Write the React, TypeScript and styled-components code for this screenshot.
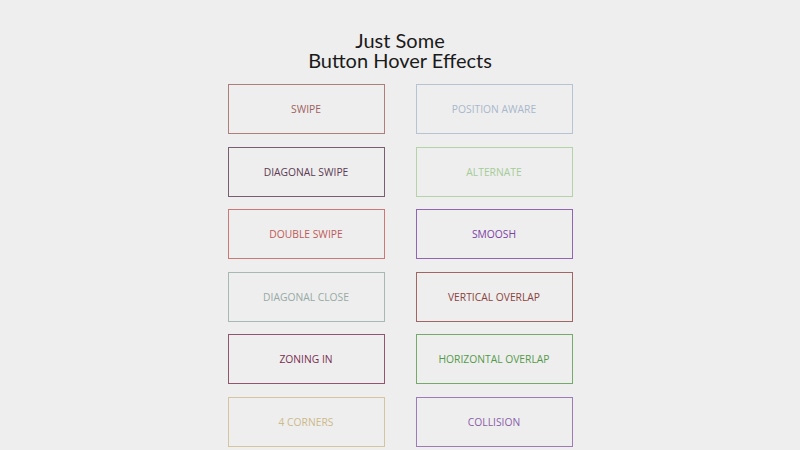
import React from "react";
import styled, { createGlobalStyle } from "styled-components";

interface Effect {
  label: string;
  color: string;
}

const effects: Effect[] = [
  { label: "Swipe", color: "#9e625e" },
  { label: "Position Aware", color: "#a9b8cc" },
  { label: "Diagonal Swipe", color: "#5c3a52" },
  { label: "Alternate", color: "#a5cc98" },
  { label: "Double Swipe", color: "#c25a58" },
  { label: "Smoosh", color: "#7c42a6" },
  { label: "Diagonal Close", color: "#97aaa5" },
  { label: "Vertical Overlap", color: "#8c4440" },
  { label: "Zoning In", color: "#783050" },
  { label: "Horizontal Overlap", color: "#559a4a" },
  { label: "4 Corners", color: "#cdba8c" },
  { label: "Collision", color: "#8a5eaa" },
];

const GlobalStyle = createGlobalStyle`
  html, body {
    margin: 0;
    padding: 0;
    background: #eeeeee;
    overflow: hidden;
  }
  body {
    font-family: "Open Sans", "Noto Sans", sans-serif;
  }
`;

const Page = styled.div`
  display: flex;
  flex-direction: column;
  align-items: center;
  padding-top: 30px;
  height: 450px;
  box-sizing: border-box;
`;

const Title = styled.h1`
  margin: 0 0 14px;
  font-family: Lato, "Noto Sans", sans-serif;
  font-weight: 400;
  font-size: 20px;
  line-height: 20px;
  color: #1a1a1a;
  text-align: center;
`;

const Grid = styled.div`
  display: grid;
  grid-template-columns: repeat(2, 157px);
  column-gap: 31px;
  row-gap: 12.6px;
`;

const EffectButton = styled.button<{ $color: string }>`
  height: 50px;
  display: flex;
  align-items: center;
  justify-content: center;
  background: transparent;
  border: 1px solid color-mix(in srgb, ${(p) => p.$color} 80%, #eeeeee);
  color: ${(p) => p.$color};
  font-family: "Open Sans", "Noto Sans", sans-serif;
  font-size: 10.3px;
  text-transform: uppercase;
  padding: 0;
  cursor: pointer;
`;

const App = () => {
  return (
    <Page>
      <GlobalStyle />
      <Title>
        Just Some
        <br />
        Button Hover Effects
      </Title>
      <Grid>
        {effects.map((effect) => (
          <EffectButton key={effect.label} $color={effect.color}>
            {effect.label}
          </EffectButton>
        ))}
      </Grid>
    </Page>
  );
};

export default App;
